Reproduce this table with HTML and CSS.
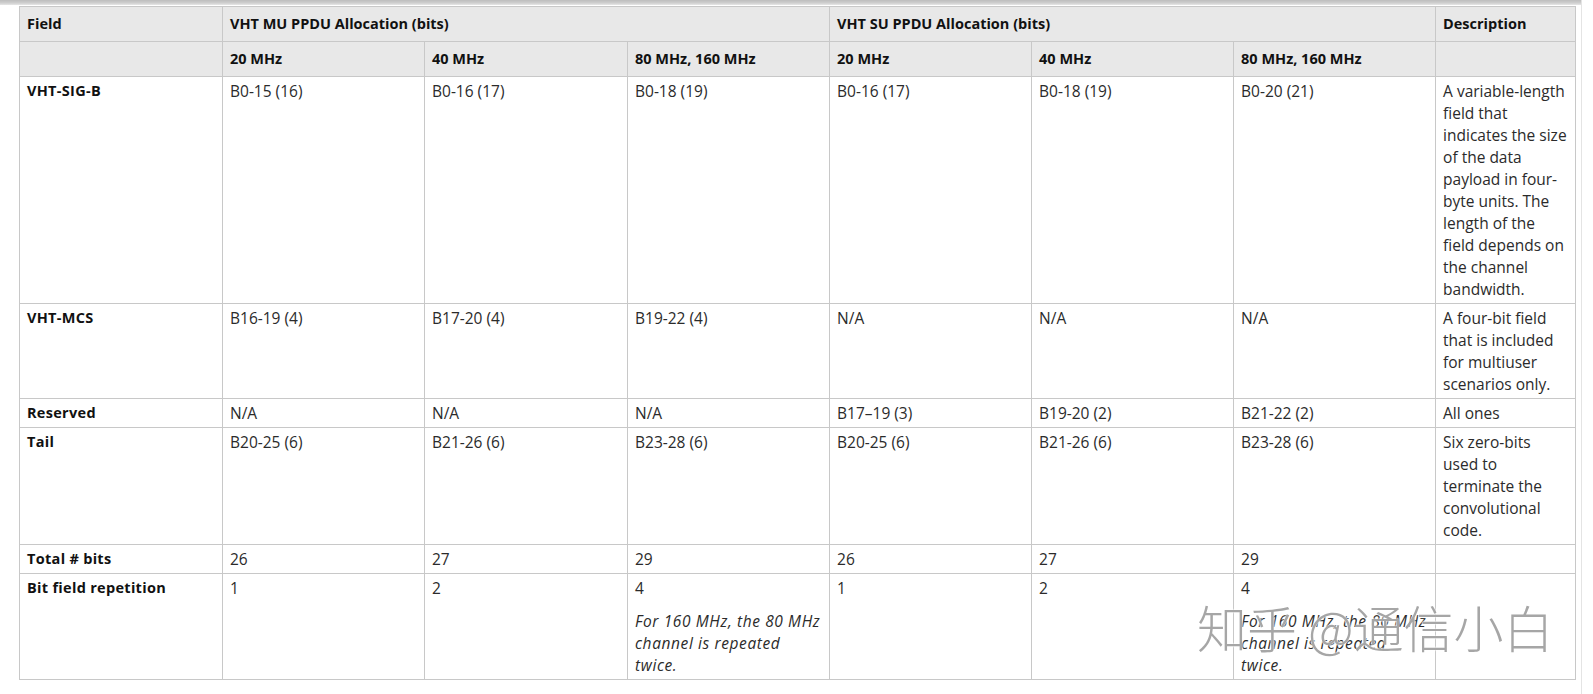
FILE: index.html
```html
<!DOCTYPE html>
<html lang="en">
<head>
<meta charset="utf-8">
<title>VHT-SIG-B fields</title>
<link rel="stylesheet" href="styles.css">
</head>
<body>
<div class="page">
  <div class="content">
    <div class="topbar"></div>
    <table class="spec">
      <colgroup>
        <col class="c-wide"><col class="c-std"><col class="c-wide"><col class="c-std"><col class="c-std"><col class="c-std"><col class="c-std"><col class="c-desc">
      </colgroup>
      <thead>
        <tr>
          <th>Field</th>
          <th colspan="3">VHT MU PPDU Allocation (bits)</th>
          <th colspan="3">VHT SU PPDU Allocation (bits)</th>
          <th>Description</th>
        </tr>
        <tr>
          <th></th>
          <th>20 MHz</th>
          <th>40 MHz</th>
          <th>80 MHz, 160 MHz</th>
          <th>20 MHz</th>
          <th>40 MHz</th>
          <th>80 MHz, 160 MHz</th>
          <th></th>
        </tr>
      </thead>
      <tbody>
        <tr>
          <td class="name">VHT-SIG-B</td>
          <td>B0-15 (16)</td><td>B0-16 (17)</td><td>B0-18 (19)</td>
          <td>B0-16 (17)</td><td>B0-18 (19)</td><td>B0-20 (21)</td>
          <td>A variable-length field that indicates the size of the data payload in four-byte units. The length of the field depends on the channel bandwidth.</td>
        </tr>
        <tr>
          <td class="name">VHT-MCS</td>
          <td>B16-19 (4)</td><td>B17-20 (4)</td><td>B19-22 (4)</td>
          <td>N/A</td><td>N/A</td><td>N/A</td>
          <td>A four-bit field that is included for multiuser scenarios only.</td>
        </tr>
        <tr>
          <td class="name">Reserved</td>
          <td>N/A</td><td>N/A</td><td>N/A</td>
          <td>B17–19 (3)</td><td>B19-20 (2)</td><td>B21-22 (2)</td>
          <td>All ones</td>
        </tr>
        <tr>
          <td class="name">Tail</td>
          <td>B20-25 (6)</td><td>B21-26 (6)</td><td>B23-28 (6)</td>
          <td>B20-25 (6)</td><td>B21-26 (6)</td><td>B23-28 (6)</td>
          <td>Six zero-bits used to terminate the convolutional code.</td>
        </tr>
        <tr>
          <td class="name">Total # bits</td>
          <td>26</td><td>27</td><td>29</td>
          <td>26</td><td>27</td><td>29</td>
          <td></td>
        </tr>
        <tr>
          <td class="name">Bit field repetition</td>
          <td>1</td><td>2</td>
          <td><p class="val">4</p><p class="note">For 160 MHz, the 80 MHz channel is repeated twice.</p></td>
          <td>1</td><td>2</td>
          <td><p class="val">4</p><p class="note">For 160 MHz, the 80 MHz channel is repeated twice.</p></td>
          <td></td>
        </tr>
      </tbody>
    </table>
  </div>
  <div class="rail"></div>
  <div class="watermark">知乎 @通信小白</div>
</div>
</body>
</html>
```

FILE: styles.css
```css
html, body {
  margin: 0;
  padding: 0;
  background: #ffffff;
}

body {
  font-family: "Open Sans", "Noto Sans", sans-serif;
  font-size: 15.5px;
  line-height: 22px;
  color: #2b2b2b;
}

.page {
  position: relative;
  display: flex;
  width: 1593px;
  height: 694px;
  overflow: hidden;
}

.content {
  width: 1581px;
  flex: none;
}

.rail {
  flex: 1;
  border-left: 1px solid #e4e4e4;
}

.topbar {
  height: 5px;
  margin-bottom: 1px;
  background: linear-gradient(#bdbdbd, #cfcfcf 60%, #e6e6e6);
}

.spec {
  margin-left: 19px;
  border-collapse: collapse;
  table-layout: fixed;
  width: 1556px;
}

.c-wide { width: 203px; }
.c-std { width: 202px; }
.c-desc { width: 140px; }

.spec th,
.spec td {
  border: 1px solid #c8c8c8;
  text-align: left;
  vertical-align: top;
  padding: 3px 6px 3px 7px;
}

.spec th {
  background: #e8e8e8;
  font-weight: 700;
  font-size: 14.5px;
  color: #111111;
  padding-top: 6px;
  padding-bottom: 6px;
}

.spec td.name {
  font-weight: 700;
  font-size: 14.5px;
  letter-spacing: 0.3px;
  color: #111111;
}

.val {
  margin: 0 0 11px;
}

.note {
  margin: 0;
  font-style: italic;
  letter-spacing: 0.6px;
}

.watermark {
  position: absolute;
  left: 1197px;
  top: 598px;
  font-family: "Noto Sans CJK SC", sans-serif;
  font-size: 50px;
  line-height: 56px;
  font-weight: 300;
  color: rgba(150, 150, 150, 0.85);
  white-space: nowrap;
  text-shadow: 0 0 2px #ffffff, 0 0 2px #ffffff;
}
```
